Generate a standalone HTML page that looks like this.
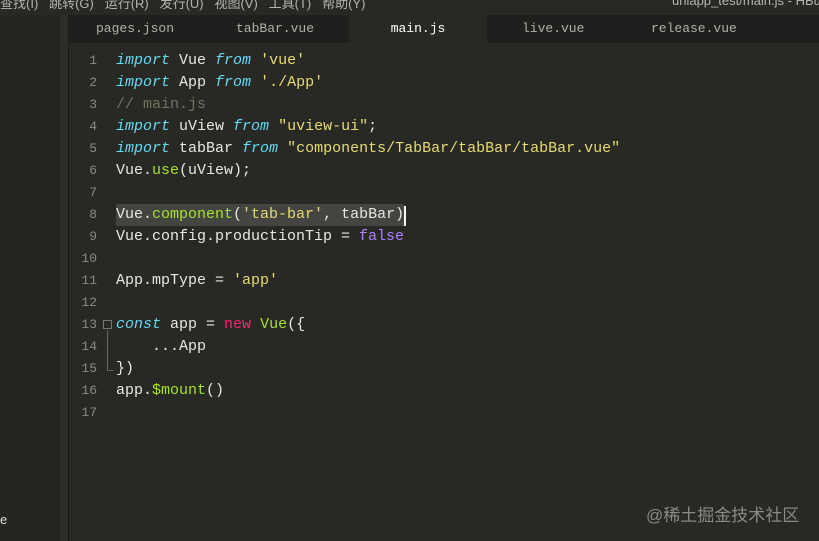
<!DOCTYPE html><html><head><style>
body{margin:0;width:819px;height:541px;background:#282825;overflow:hidden;position:relative;font-family:"Liberation Sans","Noto Sans CJK SC",sans-serif}
.menu{position:absolute;left:0;top:-7px;height:14px;font-size:13px;color:#b5b5b0;white-space:nowrap}
.left{position:absolute;left:0;top:15px;width:60px;height:526px;background:#252522}
.strip{position:absolute;left:60px;top:15px;width:8px;height:526px;background:#2d2d2a;border-right:1px solid #1a1a18}
.tabs{position:absolute;left:69px;top:15px;width:750px;height:28px;background:#1f1f1d}
.tab{position:absolute;top:0;height:28px;font:13px "Liberation Mono",monospace;line-height:28px;color:#b0b0a8}
.code{position:absolute;left:69px;top:50px;font:15px/22px "Liberation Mono",monospace;color:#e8e8e0}
.ln{position:absolute;left:0;width:28px;text-align:right;color:#8a8a84;font-size:13px}
.tx{position:absolute;left:47px;white-space:pre}
.k{color:#66d9ef;font-style:italic}.s{color:#e6db74}.c{color:#75715e}.f{color:#a6e22e}.p{color:#ae81ff}.n{color:#f92672}
</style></head><body>
<div class="menu">查找(I)&nbsp;&nbsp;&nbsp;跳转(G)&nbsp;&nbsp;&nbsp;运行(R)&nbsp;&nbsp;&nbsp;发行(U)&nbsp;&nbsp;&nbsp;视图(V)&nbsp;&nbsp;&nbsp;工具(T)&nbsp;&nbsp;&nbsp;帮助(Y)</div>
<div class="menu" style="left:672px">uniapp_test/main.js - HBu</div>
<div class="left"></div><div class="strip"></div>
<div class="tabs">
<div class="tab" style="left:27px">pages.json</div>
<div class="tab" style="left:167px">tabBar.vue</div>
<div class="tab" style="left:280px;width:138px;background:#282825;color:#fff;text-align:center">main.js</div>
<div class="tab" style="left:453px">live.vue</div>
<div class="tab" style="left:582px">release.vue</div>
</div>
<div style="position:absolute;left:0;top:512px;font-size:13px;color:#ddd">e</div>
<div class="code">
<div style="position:absolute;left:47px;top:154px;width:288px;height:22px;background:#444440"></div>
<div style="position:absolute;left:335px;top:156px;width:2px;height:20px;background:#f8f8f2"></div>
<div class="ln" style="top:0">1</div><div class="tx" style="top:0"><span class="k">import</span> Vue <span class="k">from</span> <span class="s">'vue'</span></div>
<div class="ln" style="top:22px">2</div><div class="tx" style="top:22px"><span class="k">import</span> App <span class="k">from</span> <span class="s">'./App'</span></div>
<div class="ln" style="top:44px">3</div><div class="tx c" style="top:44px">// main.js</div>
<div class="ln" style="top:66px">4</div><div class="tx" style="top:66px"><span class="k">import</span> uView <span class="k">from</span> <span class="s">"uview-ui"</span>;</div>
<div class="ln" style="top:88px">5</div><div class="tx" style="top:88px"><span class="k">import</span> tabBar <span class="k">from</span> <span class="s">"components/TabBar/tabBar/tabBar.vue"</span></div>
<div class="ln" style="top:110px">6</div><div class="tx" style="top:110px">Vue.<span class="f">use</span>(uView);</div>
<div class="ln" style="top:132px">7</div>
<div class="ln" style="top:154px">8</div><div class="tx" style="top:154px">Vue.<span class="f">component</span>(<span class="s">'tab-bar'</span>, tabBar)</div>
<div class="ln" style="top:176px">9</div><div class="tx" style="top:176px">Vue.config.productionTip = <span class="p">false</span></div>
<div class="ln" style="top:198px">10</div>
<div class="ln" style="top:220px">11</div><div class="tx" style="top:220px">App.mpType = <span class="s">'app'</span></div>
<div class="ln" style="top:242px">12</div>
<div class="ln" style="top:264px">13</div><div style="position:absolute;left:34px;top:270px;width:7px;height:7px;border:1px solid #777"></div><div class="tx" style="top:264px"><span class="k">const</span> app = <span class="n">new</span> <span class="f">Vue</span>({</div>
<div style="position:absolute;left:38px;top:280px;width:5px;height:40px;border-left:1px solid #666;border-bottom:1px solid #666"></div>
<div class="ln" style="top:286px">14</div><div class="tx" style="top:286px">    ...App</div>
<div class="ln" style="top:308px">15</div><div class="tx" style="top:308px">})</div>
<div class="ln" style="top:330px">16</div><div class="tx" style="top:330px">app.<span class="f">$mount</span>()</div>
<div class="ln" style="top:352px">17</div>
</div>
<div style="position:absolute;left:646px;top:501px;font-size:17px;color:#8a8a85">@稀土掘金技术社区</div>
</body></html>
